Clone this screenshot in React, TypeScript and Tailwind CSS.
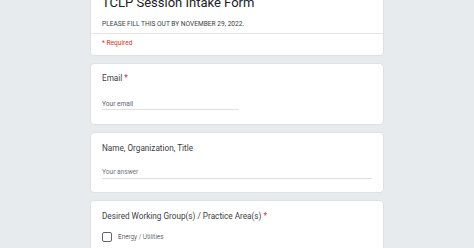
export default function App() {
  return (
    <div className="h-[248px] w-[474px] overflow-hidden bg-[#e7ebee] font-['Roboto',sans-serif] text-[#3c4043]">
      <div className="mx-auto flex w-[294px] flex-col gap-[7px]">
        <div className="-mt-[16px] rounded-[4px] border border-[#dde1e4] bg-white">
          <div className="px-[11px] pt-2 pb-1">
            <h1 className="text-[13px] leading-[20px] font-normal text-[#202124]">TCLP Session Intake Form</h1>
            <p className="mt-[6px] text-[6.6px] leading-[10px] text-[#3c4043]">
              PLEASE FILL THIS OUT BY NOVEMBER 29, 2022.
            </p>
          </div>
          <div className="h-px bg-[#e3e5e8]" />
          <p className="px-[11px] pt-[4px] pb-[7px] text-[6.6px] leading-[10px] text-[#d93025]">* Required</p>
        </div>

        <div className="rounded-[4px] border border-[#dde1e4] bg-white px-[11px] pt-[8px] pb-[14px]">
          <p className="text-[8.2px] leading-[12px] font-normal">
            Email <span className="text-[#d93025]">*</span>
          </p>
          <div className="mt-[15px] w-[137px] border-b border-[#e0e0e0] text-[6.6px] leading-[10px] text-[#5f6368]">
            Your email
          </div>
        </div>

        <div className="rounded-[4px] border border-[#dde1e4] bg-white px-[11px] pt-[9px] pb-[13px]">
          <p className="text-[8.2px] leading-[12px] font-normal">Name, Organization, Title</p>
          <div className="mt-[13px] border-b border-[#e0e0e0] text-[6.6px] leading-[11px] text-[#70757a]">
            Your answer
          </div>
        </div>

        <div className="rounded-[4px] border border-[#dde1e4] bg-white px-[11px] pt-[9px] pb-4">
          <p className="text-[8.2px] leading-[12px] font-normal">
            Desired Working Group(s) / Practice Area(s) <span className="text-[#d93025]">*</span>
          </p>
          <label className="mt-[10px] flex items-center gap-[6px]">
            <span className="h-[10px] w-[10px] rounded-[2px] border-[1.5px] border-[#5f6368]" />
            <span className="text-[6.4px] leading-[10px] font-light text-[#202124]">Energy / Utilities</span>
          </label>
        </div>
      </div>
    </div>
  );
}
